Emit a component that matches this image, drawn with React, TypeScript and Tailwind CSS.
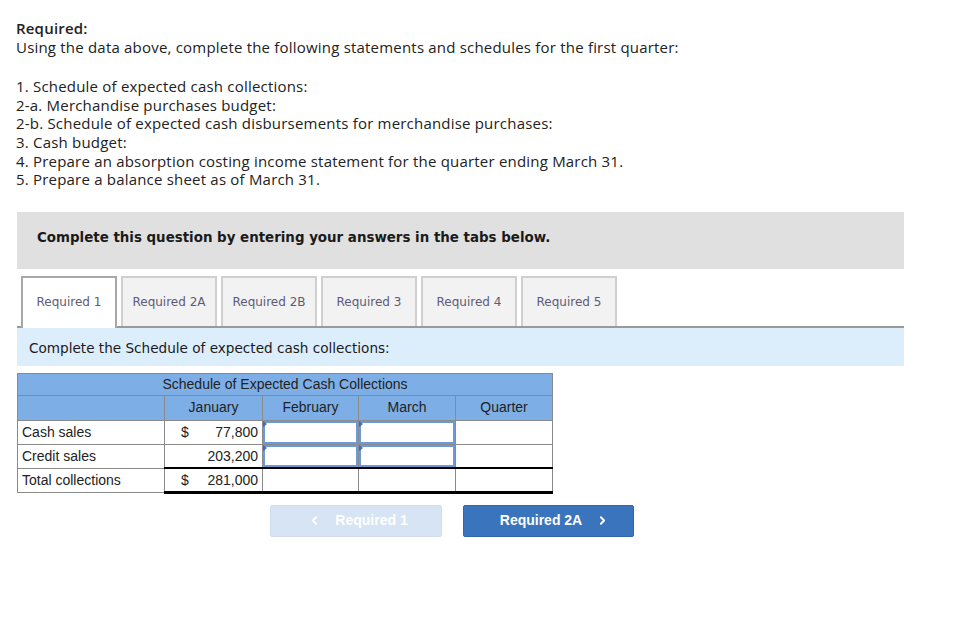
import React from "react";
import { ChevronLeft, ChevronRight } from "lucide-react";

const tabs = ["Required 1", "Required 2A", "Required 2B", "Required 3", "Required 4", "Required 5"];

const InputMark = () => (
  <span className="absolute left-0 top-0 w-0 h-0 border-t-[3px] border-b-[3px] border-l-[4px] border-t-transparent border-b-transparent border-l-[#3d6fb6]" />
);

const InputCell = () => (
  <td className="relative p-0 border border-[#8a8a8a] h-[23px]">
    <div className="absolute inset-0 border-2 border-[#6b9ad6]" />
    <InputMark />
  </td>
);

const cell = "border border-[#8a8a8a]";
const totalCell = "border border-[#8a8a8a] border-t-2 border-t-black border-b-[3px] border-b-black";

export default function App() {
  return (
    <div className="w-[958px] h-[631px] bg-white text-[#222]">
      <div className="pl-4 pt-[19px] text-[15px] leading-[18.6px] tracking-[0.2px] text-[#222]" style={{ fontFamily: "'Open Sans', Lato, sans-serif" }}>
        <div className="font-semibold">Required:</div>
        <div>Using the data above, complete the following statements and schedules for the first quarter:</div>
        <div className="mt-[21px]">1. Schedule of expected cash collections:</div>
        <div>2-a. Merchandise purchases budget:</div>
        <div>2-b. Schedule of expected cash disbursements for merchandise purchases:</div>
        <div>3. Cash budget:</div>
        <div>4. Prepare an absorption costing income statement for the quarter ending March 31.</div>
        <div>5. Prepare a balance sheet as of March 31.</div>
      </div>

      <div className="ml-[17px] w-[887px] mt-[23px]" style={{ fontFamily: "'DejaVu Sans', Verdana, sans-serif" }}>
        <div className="h-[57px] bg-[#e0e0e0] flex items-center pl-5 pb-[5px] text-[13.4px] font-bold text-[#1a1a1a]">
          Complete this question by entering your answers in the tabs below.
        </div>

        <div className="mt-2 flex items-end border-b-2 border-[#9a9a9a] h-[51px]">
          <div className="w-1 shrink-0" />
          {tabs.map((t, i) => (
            <div
              key={t}
              className={
                i === 0
                  ? "w-[96px] h-[52px] -mb-[2px] pb-[2px] bg-white border-2 border-b-0 border-[#a8a8a8] flex items-center justify-center text-[12px] text-[#5b5b78] mr-[4px]"
                  : "w-[96px] h-[50px] bg-[#f2f2f2] border-2 border-b-0 border-[#cfcfcf] flex items-center justify-center text-[12px] text-[#5b5b78] mr-[4px]"
              }
            >
              {t}
            </div>
          ))}
        </div>

        <div className="h-[38px] bg-[#dcedfb] flex items-center pl-3 pt-[2px] text-[13.6px] text-[#1a1a1a]">
          Complete the Schedule of expected cash collections:
        </div>
      </div>

      <div className="ml-[17px] mt-[7px]" style={{ fontFamily: "'Liberation Sans', Arial, sans-serif" }}>
        <table className="border-collapse text-[14px] text-[#222] table-fixed w-[535px]">
          <colgroup>
            <col className="w-[147px]" />
            <col className="w-[98px]" />
            <col className="w-[96px]" />
            <col className="w-[97px]" />
            <col className="w-[97px]" />
          </colgroup>
          <tbody>
            <tr className="bg-[#7dafe6] h-[22px]">
              <td colSpan={5} className={`${cell} text-center leading-none`}>
                Schedule of Expected Cash Collections
              </td>
            </tr>
            <tr className="bg-[#7dafe6] h-[25px]">
              <td className={cell} />
              <td className={`${cell} text-center`}>January</td>
              <td className={`${cell} text-center`}>February</td>
              <td className={`${cell} text-center`}>March</td>
              <td className={`${cell} text-center`}>Quarter</td>
            </tr>
            <tr className="h-[24px]">
              <td className={`${cell} pl-1`}>Cash sales</td>
              <td className={`${cell} px-1`}>
                <div className="flex justify-between pl-3">
                  <span>$</span>
                  <span>77,800</span>
                </div>
              </td>
              <InputCell />
              <InputCell />
              <td className={cell} />
            </tr>
            <tr className="h-[24px]">
              <td className={`${cell} pl-1`}>Credit sales</td>
              <td className={`${cell} px-1 text-right`}>203,200</td>
              <InputCell />
              <InputCell />
              <td className={cell} />
            </tr>
            <tr className="h-[24px]">
              <td className={`${cell} pl-1`}>Total collections</td>
              <td className={`${totalCell} px-1`}>
                <div className="flex justify-between pl-3">
                  <span>$</span>
                  <span>281,000</span>
                </div>
              </td>
              <td className={totalCell} />
              <td className={totalCell} />
              <td className={totalCell} />
            </tr>
          </tbody>
        </table>
      </div>

      <div className="ml-[270px] mt-[11px] flex gap-[21px]" style={{ fontFamily: "'Liberation Sans', Arial, sans-serif" }}>
        <button className="w-[172px] h-[32px] bg-[#d6e4f3] border border-[#cfdeef] rounded-[2px] text-white font-bold text-[14px] flex items-center justify-center gap-[14px] pl-1">
          <ChevronLeft size={13} strokeWidth={3.5} />
          <span>Required 1</span>
        </button>
        <button className="w-[171px] h-[32px] bg-[#3a74bd] border border-[#2f66ad] rounded-[2px] text-white font-bold text-[14px] flex items-center justify-center gap-[14px] pl-3">
          <span>Required 2A</span>
          <ChevronRight size={13} strokeWidth={3.5} />
        </button>
      </div>
    </div>
  );
}
